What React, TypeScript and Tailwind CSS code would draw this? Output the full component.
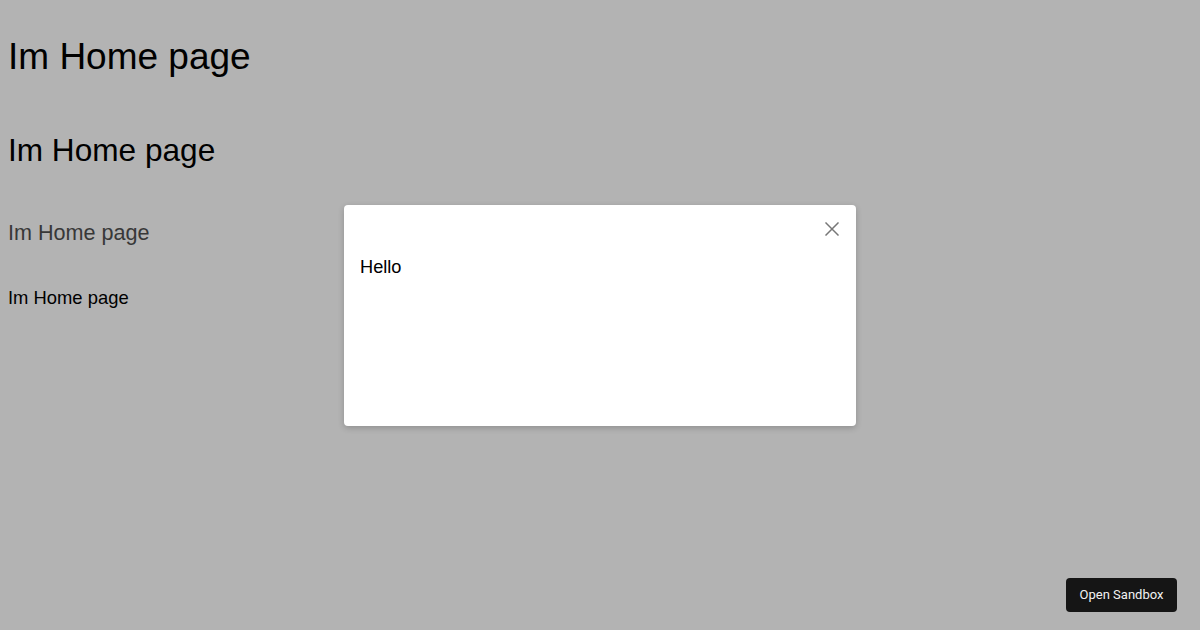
const CloseIcon = () => (
    <svg width="14" height="14" viewBox="0 0 14 14" fill="none">
        <path
            d="M1 1L13 13M13 1L1 13"
            stroke="#777777"
            strokeWidth="1.5"
            strokeLinecap="square"
        />
    </svg>
);

export default function App() {
    return (
        <div className="relative flex h-[630px] w-[1200px] flex-col overflow-hidden bg-[#b3b3b3] font-['Liberation_Sans',Arial,sans-serif] text-black">
            {/* page, dimmed behind the modal */}
            <div className="flex flex-col items-start px-2 pt-[35px]">
                <h1 className="text-[37px] leading-[44px] font-normal">
                    Im Home page
                </h1>
                <h2 className="mt-[53px] text-[31.6px] leading-[36px] font-normal">
                    Im Home page
                </h2>
                <h3 className="mt-[53px] text-[21.6px] leading-[24px] font-normal text-[#383838]">
                    Im Home page
                </h3>
                <p className="mt-[42px] text-[18.4px] leading-[22px]">
                    Im Home page
                </p>
            </div>

            {/* modal */}
            <div className="absolute inset-0 flex items-center justify-center">
                <div className="relative h-[221px] w-[512px] rounded bg-white px-4 pt-[51px] shadow-[0_2px_6px_rgba(0,0,0,0.2)]">
                    <button className="absolute top-[17px] right-[17px] flex h-[14px] w-[14px] items-center justify-center">
                        <CloseIcon />
                    </button>
                    <p className="text-[18.2px] leading-[22px]">Hello</p>
                </div>
            </div>

            <button className="absolute right-[23px] bottom-[18px] flex h-[34px] w-[111px] items-center justify-center rounded bg-[#151515] font-['Roboto',sans-serif] text-[13px] text-[#f2f2f2]">
                Open Sandbox
            </button>
        </div>
    );
}
